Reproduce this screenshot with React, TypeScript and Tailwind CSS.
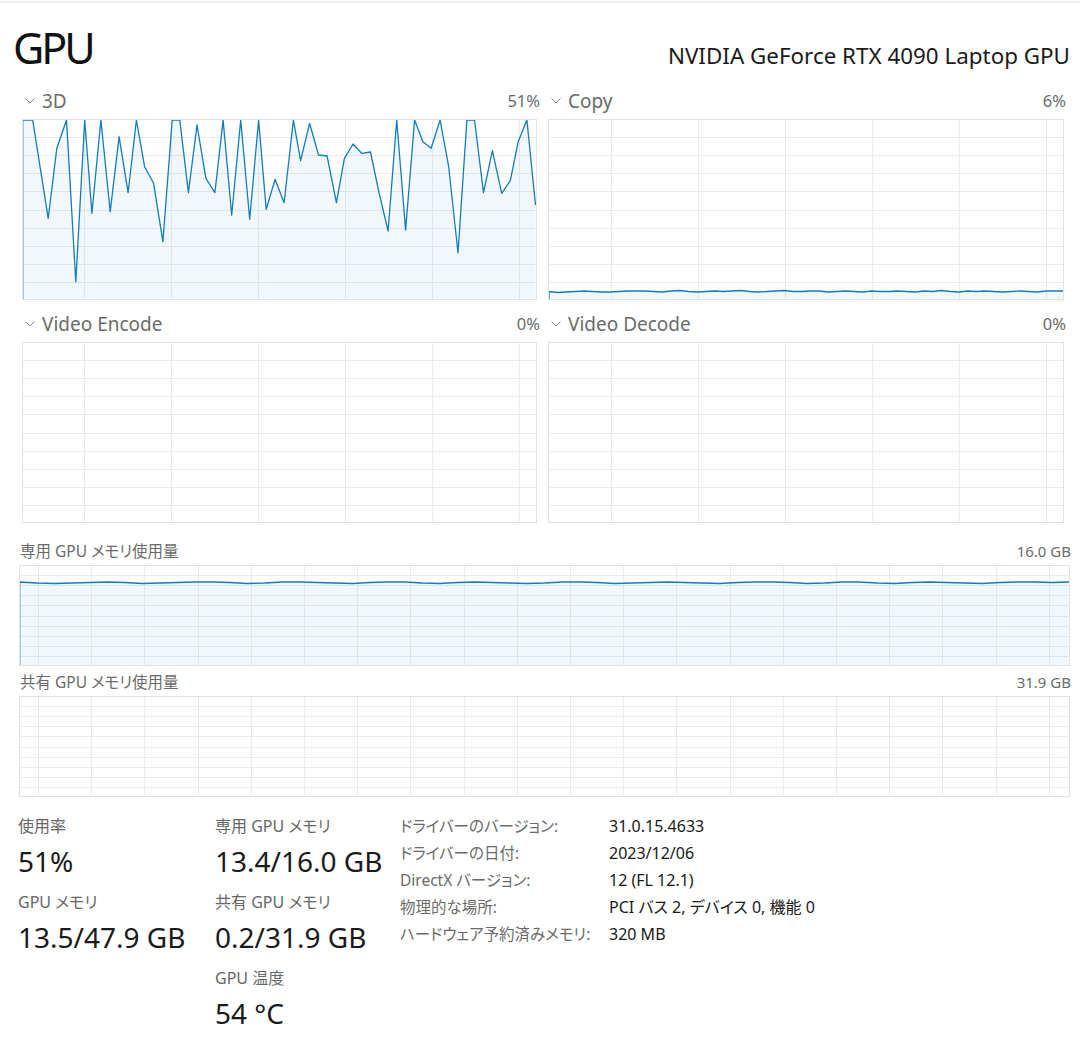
import type { ReactNode } from 'react';

const BLUE = '#117dbb';

type Pt = [number, number];

// 3D engine samples, taken in page coordinates (chart sits at 22,119)
const PTS_3D: Pt[] = [
  [22.7, 300], [22.7, 120], [32.7, 120], [48.2, 218.3], [56.8, 148.3], [66.5, 120], [75.8, 281.7],
  [84.7, 120], [91.9, 213.3], [100.9, 120], [110.2, 211.7], [119.1, 136.7], [128.1, 192.7],
  [136.4, 120], [144.6, 166.7], [153.6, 183.3], [162.9, 241.7], [172.2, 120], [179.8, 120],
  [188.4, 192.7], [197, 125], [205.9, 178.3], [214.9, 192.7], [223.1, 120], [231.7, 215],
  [240.7, 120], [249.7, 219.3], [258.6, 120], [266.2, 209.3], [275.1, 179.3], [284.1, 202.7],
  [293.4, 120], [300.6, 160.7], [309.6, 123.3], [318.5, 155], [327.1, 156], [336.4, 202.7],
  [344.4, 158.3], [353, 144], [361.6, 153.3], [370.5, 152], [378.8, 191.7], [388.1, 231],
  [396.7, 120], [405.6, 230], [414.6, 120], [422.9, 141.7], [431.1, 148.3], [440.1, 120],
  [448.7, 166.7], [458, 252.7], [466.9, 120], [474.5, 120], [483.5, 192.7], [492.4, 150.7],
  [501.7, 193.3], [510.3, 180.7], [518.2, 141.7], [526.9, 120], [535.5, 205],
];

const COPY_Y = [
  172.5, 173.5, 173, 172.5, 172, 172.5, 173, 173, 172.5, 172, 172, 172, 172.5, 173, 172, 171.5,
  172.5, 173, 172.5, 172, 172.5, 172, 171.5, 172.5, 173, 172.5, 172, 171.5, 172.5, 172.5, 172,
  172, 173, 172.5, 172, 172.5, 173, 172, 172.5, 172.5, 172, 172.5, 173, 172, 172.5, 171.5, 172.5,
  173, 172, 172.5, 172, 172.5, 173, 172.5, 172, 172.5, 173, 172, 172, 172,
];

const MEM_Y = [
  17, 18, 18.5, 18, 17.5, 17, 17.5, 18.5, 18, 17.5, 17, 17, 17.5, 18.5, 18, 17, 17, 17.5, 18, 18.5,
  17.5, 17, 17, 18, 18.5, 17.5, 17, 17.5, 18, 18.5, 18, 17, 17, 17.5, 18.5, 18, 17.5, 17, 17.5, 18,
  18.5, 17.5, 17, 17, 17.5, 18.5, 18, 17, 17, 18, 18.5, 17.5, 17, 17.5, 18, 18.5, 17.5, 17, 17,
  17.5, 17,
];

function fromYs(ys: number[], x0: number, step: number, bottom: number): Pt[] {
  const pts: Pt[] = [[x0, bottom]];
  ys.forEach((y, i) => pts.push([x0 + i * step, y]));
  return pts;
}

function Series({ pts, bottom }: { pts: Pt[]; bottom: number }) {
  const last = pts[pts.length - 1];
  const line = pts.map((p) => p.join(',')).join(' ');
  const area = `${line} ${last[0]},${bottom} ${pts[0][0]},${bottom}`;
  return (
    <>
      <polygon points={area} fill={BLUE} fillOpacity={0.06} />
      <polyline points={line} fill="none" stroke={BLUE} strokeWidth={1.3} strokeLinejoin="round" />
    </>
  );
}

interface ChartProps {
  w: number;
  h: number;
  rows: number;
  first: number;
  step: number;
  children?: ReactNode;
}

function Chart({ w, h, rows, first, step, children }: ChartProps) {
  const xs: number[] = [];
  for (let x = first; x < w - 2; x += step) xs.push(Math.round(x) + 0.5);
  const ys: number[] = [];
  for (let i = 1; i < rows; i++) ys.push(Math.round((h * i) / rows) + 0.5);

  return (
    <svg width={w} height={h} className="block">
      <g stroke="#ebebeb" strokeWidth={1} shapeRendering="crispEdges">
        {xs.map((x) => (
          <line key={`x${x}`} x1={x} y1={0} x2={x} y2={h} />
        ))}
        {ys.map((y) => (
          <line key={`y${y}`} x1={0} y1={y} x2={w} y2={y} />
        ))}
      </g>
      {children}
      <rect
        x={0.5}
        y={0.5}
        width={w - 1}
        height={h - 1}
        fill="none"
        stroke="#e2e2e2"
        shapeRendering="crispEdges"
      />
    </svg>
  );
}

function Chevron() {
  return (
    <svg width="10" height="6" viewBox="0 0 10 6" className="block">
      <polyline points="0.5,0.5 5,5 9.5,0.5" fill="none" stroke="#8c8c8c" strokeWidth="1" />
    </svg>
  );
}

function EngineLabel({ name, value }: { name: string; value: string }) {
  return (
    <div className="flex h-[18px] items-center justify-between pl-[3px] leading-[18px] text-[#6b6b6b]">
      <div className="flex items-center">
        <Chevron />
        <span className="ml-[7px] text-[19px]">{name}</span>
      </div>
      <span className="text-[16.5px]">{value}</span>
    </div>
  );
}

function Stat({ label, value }: { label: string; value: string }) {
  return (
    <div className="mb-[16px]">
      <div className="h-[18px] text-[16px] leading-[18px] text-[#676767]">{label}</div>
      <div className="mt-[10px] h-[32px] text-[28px] leading-[32px] text-[#1a1a1a]">{value}</div>
    </div>
  );
}

const details: [string, string][] = [
  ['ドライバーのバージョン:', '31.0.15.4633'],
  ['ドライバーの日付:', '2023/12/06'],
  ['DirectX バージョン:', '12 (FL 12.1)'],
  ['物理的な場所:', 'PCI バス 2, デバイス 0, 機能 0'],
  ['ハードウェア予約済みメモリ:', '320 MB'],
];

export default function App() {
  return (
    <div className="h-[1042px] w-[1080px] overflow-hidden bg-white font-['Noto_Sans','Noto_Sans_CJK_JP',sans-serif] [font-feature-settings:'palt']">
      <div className="mt-[1px] h-[2px] bg-[#f1eeeb]" />

      <div className="flex items-baseline justify-between pl-[13px] pr-[10px] pt-[23px]">
        <h1 className="text-[43px] leading-[44px] tracking-[-3px] text-[#111]">GPU</h1>
        <div className="text-[22.4px] leading-[28px] text-[#1a1a1a]">NVIDIA GeForce RTX 4090 Laptop GPU</div>
      </div>

      <div className="mt-[22px] grid grid-cols-[518px_518px] gap-x-[8px] pl-[22px]">
        <div>
          <EngineLabel name="3D" value="51%" />
          <div className="mt-[9px]">
            <Chart w={515} h={181} rows={10} first={62} step={87}>
              <g transform="translate(-22 -119)">
                <Series pts={PTS_3D} bottom={300} />
              </g>
            </Chart>
          </div>
        </div>
        <div>
          <EngineLabel name="Copy" value="6%" />
          <div className="mt-[9px]">
            <Chart w={516} h={181} rows={10} first={63} step={87}>
              <Series pts={fromYs(COPY_Y, 1, 8.72, 180)} bottom={180} />
            </Chart>
          </div>
        </div>

        <div className="mt-[15px]">
          <EngineLabel name="Video Encode" value="0%" />
          <div className="mt-[9px]">
            <Chart w={515} h={181} rows={10} first={62} step={87} />
          </div>
        </div>
        <div className="mt-[15px]">
          <EngineLabel name="Video Decode" value="0%" />
          <div className="mt-[9px]">
            <Chart w={516} h={181} rows={10} first={63} step={87} />
          </div>
        </div>
      </div>

      <div className="mt-[19px] w-[1070px] pl-[19px]">
        <div className="flex h-[18px] items-center justify-between pl-[1px] leading-[18px] text-[#6b6b6b]">
          <span className="text-[15.5px]">専用 GPU メモリ使用量</span>
          <span className="-mr-[1px] text-[15px]">16.0 GB</span>
        </div>
        <div className="mt-[5px]">
          <Chart w={1051} h={101} rows={10} first={19} step={53.2}>
            <Series pts={fromYs(MEM_Y, 0.7, 17.5, 100)} bottom={100} />
          </Chart>
        </div>

        <div className="mt-[7px] flex h-[18px] items-center justify-between pl-[1px] leading-[18px] text-[#6b6b6b]">
          <span className="text-[15.5px]">共有 GPU メモリ使用量</span>
          <span className="-mr-[1px] text-[15px]">31.9 GB</span>
        </div>
        <div className="mt-[5px]">
          <Chart w={1051} h={101} rows={10} first={19} step={53.2} />
        </div>
      </div>

      <div className="mt-[20px] flex">
        <div className="w-[215px] pl-[18px]">
          <Stat label="使用率" value="51%" />
          <Stat label="GPU メモリ" value="13.5/47.9 GB" />
        </div>
        <div className="w-[185px]">
          <Stat label="専用 GPU メモリ" value="13.4/16.0 GB" />
          <Stat label="共有 GPU メモリ" value="0.2/31.9 GB" />
          <Stat label="GPU 温度" value="54 °C" />
        </div>
        <div className="-mt-[4px] grid grid-cols-[209px_auto] content-start leading-[27px]">
          {details.map(([k, v]) => (
            <div key={k} className="contents">
              <span className="text-[15.5px] text-[#6b6b6b]">{k}</span>
              <span className="text-[16px] text-[#1a1a1a]">{v}</span>
            </div>
          ))}
        </div>
      </div>
    </div>
  );
}
